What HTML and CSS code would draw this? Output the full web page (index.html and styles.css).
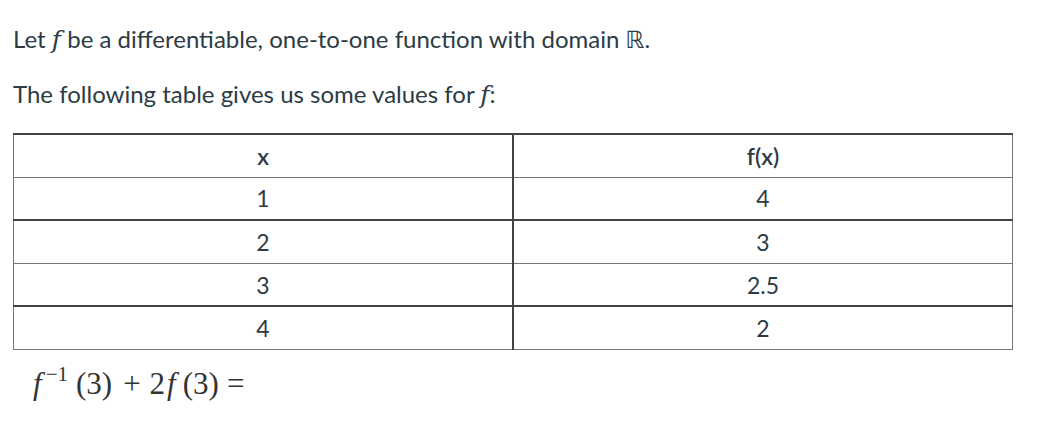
FILE: index.html
```html
<!DOCTYPE html>
<html>
<head>
<meta charset="utf-8">
<link rel="stylesheet" href="styles.css">
</head>
<body>
<div class="page">
  <p class="line">Let <span class="mi">f</span> be a differentiable, one-to-one function with domain <span class="bb">ℝ</span>.</p>
  <p class="line second">The following table gives us some values for <span class="mi">f</span>:</p>
  <table class="values">
    <thead>
      <tr><th>x</th><th>f(x)</th></tr>
    </thead>
    <tbody>
      <tr class="r1"><td>1</td><td>4</td></tr>
      <tr class="r2"><td>2</td><td>3</td></tr>
      <tr class="r3"><td>3</td><td>2.5</td></tr>
      <tr class="r4"><td>4</td><td>2</td></tr>
    </tbody>
  </table>
  <div class="eq"><span class="mi">f</span><sup class="exp">−1</sup><span class="paren">(3)</span><span class="bin">+</span><span>2</span><span class="mi f2">f</span><span class="paren">(3)</span><span class="rel">=</span></div>
</div>
</body>
</html>
```
FILE: styles.css
```css
html, body { margin: 0; padding: 0; background: #fff; }
body {
  font-family: Lato, "Noto Sans", sans-serif;
  color: #2d3b45;
}
.page { padding: 21px 13px 0 13px; width: 1000px; }
.line { margin: 0; font-size: 24px; line-height: 36px; }
.second { margin-top: 18px; }
.mi {
  font-family: "DejaVu Serif", "Liberation Serif", serif;
  font-style: italic;
  font-size: 25px;
}
.bb { font-family: "DejaVu Sans", sans-serif; }
.values {
  margin-top: 20px;
  width: 1000px;
  table-layout: fixed;
  border-collapse: collapse;
  font-size: 23px;
  color: #2d3b45;
}
.values th, .values td {
  text-align: center;
  height: 41.6px;
  padding: 0;
  border: 1px solid #777;
}
.values th { font-weight: 600; }
.values thead tr th { border-top: 2px solid #444; }
.values th:first-child, .values td:first-child { border-right: 2px solid #444; }
.values .r2 td, .values .r4 td { border-top: 2px solid #444; }
.eq {
  margin-top: 16px;
  padding-left: 20px;
  font-family: "Liberation Serif", "DejaVu Serif", serif;
  font-size: 31px;
  color: #333;
  display: flex;
  align-items: baseline;
}
.eq .mi { font-family: "Liberation Serif", serif; font-size: 31px; }
.exp { font-size: 21px; position: relative; top: -13px; margin-left: 4px; margin-right: 8px; }
.bin { margin: 0 9px 0 11px; }
.rel { margin-left: 8px; }
.f2 { margin-left: 2px; margin-right: 7px; }
```
